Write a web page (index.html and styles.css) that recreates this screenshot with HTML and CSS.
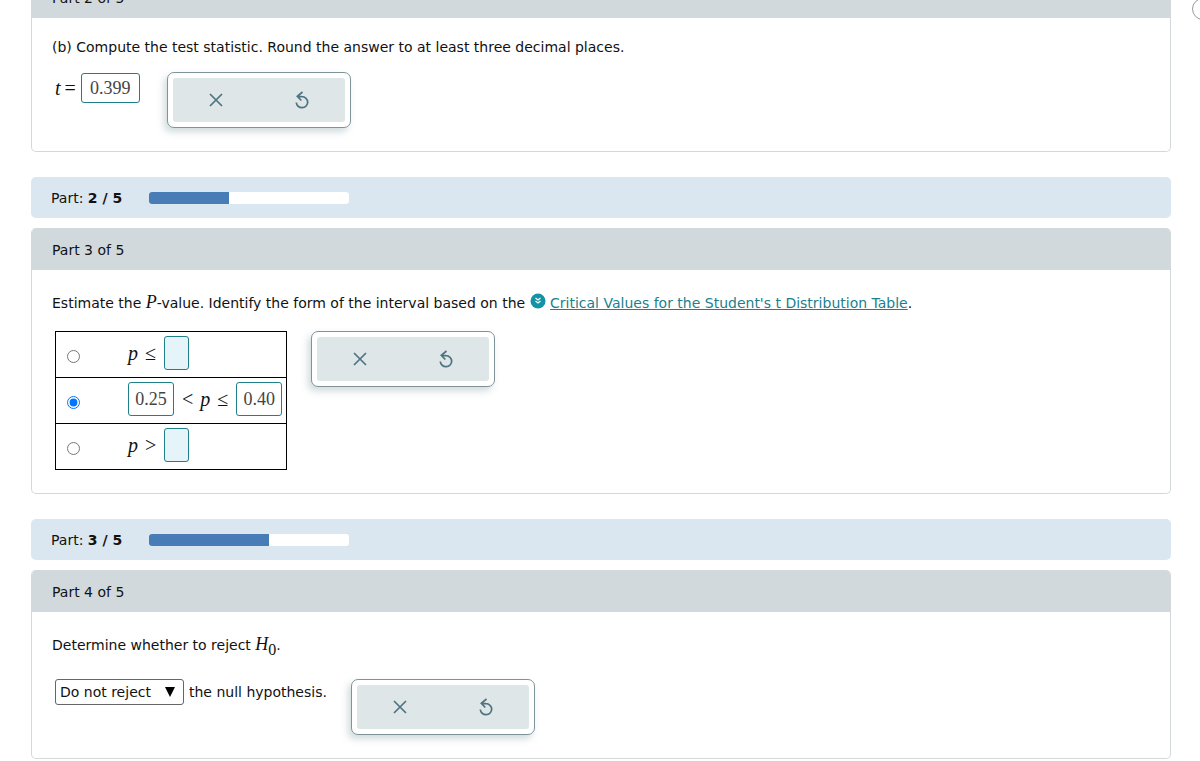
FILE: index.html
```
<!DOCTYPE html>
<html lang="en">
<head>
    <meta charset="UTF-8">
    <meta name="viewport" content="width=device-width, initial-scale=1.0">
    <title>Hypothesis Test</title>
    <link rel="stylesheet" href="styles.css">
</head>
<body>
    <svg class="icon-sprite" aria-hidden="true">
        <symbol id="icon-clear" viewBox="0 0 18 18">
            <path d="M3 3 L15 15 M15 3 L3 15" />
        </symbol>
        <symbol id="icon-undo" viewBox="0 0 18 18">
            <path d="M3.300 11.500 A5.700 5.500 0 1 0 9 5.700 L4.500 5.300 M9.500 1 L4.300 5.300 L8.300 9.500" />
        </symbol>
    </svg>

    <button class="side-btn" type="button" aria-label="Help"></button>

    <main class="container">
        <section class="card">
            <h2 class="card-header">Part 2 of 5</h2>
            <div class="card-body compact">
                <p class="prompt">(b) Compute the test statistic. Round the answer to at least three decimal places.</p>
                <div class="answer-row">
                    <div class="statistic">
                        <label class="formula" for="tValue"><i>t</i> <span>=</span></label>
                        <input class="box" type="text" id="tValue" value="0.399">
                    </div>
                    <div class="keypad">
                        <button type="button" aria-label="Clear"><svg><use href="#icon-clear" /></svg></button>
                        <button type="button" aria-label="Undo"><svg><use href="#icon-undo" /></svg></button>
                    </div>
                </div>
            </div>
        </section>

        <div class="progress">
            <span class="progress-label">Part: <b>2 / 5</b></span>
            <div class="progress-track"><div class="progress-fill" style="width: 40%"></div></div>
        </div>

        <section class="card">
            <h2 class="card-header">Part 3 of 5</h2>
            <div class="card-body">
                <p class="prompt">Estimate the <i class="math">P</i>-value. Identify the form of the interval based on the
                    <svg class="link-icon" viewBox="0 0 16 16" aria-hidden="true">
                        <circle cx="8" cy="8" r="7.5" />
                        <path d="M5.5 5 L8 7 L10.5 5 M5.5 8 L8 10 L10.5 8" />
                    </svg>
                    <a href="#">Critical Values for the Student's t Distribution Table</a>.</p>
                <div class="answer-row">
                    <table class="intervals">
                        <tr>
                            <td>
                                <div class="choice">
                                    <input type="radio" name="interval" aria-label="p at most">
                                    <div class="expression">
                                        <label class="formula" for="atMost"><i>p</i> <span>≤</span></label>
                                        <input class="box empty" type="text" id="atMost">
                                    </div>
                                </div>
                            </td>
                        </tr>
                        <tr>
                            <td>
                                <div class="choice">
                                    <input type="radio" name="interval" aria-label="p between" checked>
                                    <div class="expression">
                                        <input class="box" type="text" id="lower" value="0.25" aria-label="Lower bound">
                                        <label class="formula" for="upper"><span>&lt;</span> <i>p</i> <span>≤</span></label>
                                        <input class="box" type="text" id="upper" value="0.40">
                                    </div>
                                </div>
                            </td>
                        </tr>
                        <tr>
                            <td>
                                <div class="choice">
                                    <input type="radio" name="interval" aria-label="p greater than">
                                    <div class="expression">
                                        <label class="formula" for="above"><i>p</i> <span>&gt;</span></label>
                                        <input class="box empty" type="text" id="above">
                                    </div>
                                </div>
                            </td>
                        </tr>
                    </table>
                    <div class="keypad">
                        <button type="button" aria-label="Clear"><svg><use href="#icon-clear" /></svg></button>
                        <button type="button" aria-label="Undo"><svg><use href="#icon-undo" /></svg></button>
                    </div>
                </div>
            </div>
        </section>

        <div class="progress">
            <span class="progress-label">Part: <b>3 / 5</b></span>
            <div class="progress-track"><div class="progress-fill" style="width: 60%"></div></div>
        </div>

        <section class="card">
            <h2 class="card-header">Part 4 of 5</h2>
            <div class="card-body spacious">
                <p class="prompt">Determine whether to reject <span class="math"><i>H</i><sub>0</sub></span>.</p>
                <div class="answer-row">
                    <div class="conclusion">
                        <span class="select-wrap">
                            <select id="decision">
                                <option>Do not reject</option>
                                <option>Reject</option>
                            </select>
                            <svg class="arrow" viewBox="0 0 10 10" aria-hidden="true"><path d="M0 0 H10 L5 10 Z" /></svg>
                        </span>
                        <label for="decision">the null hypothesis.</label>
                    </div>
                    <div class="keypad">
                        <button type="button" aria-label="Clear"><svg><use href="#icon-clear" /></svg></button>
                        <button type="button" aria-label="Undo"><svg><use href="#icon-undo" /></svg></button>
                    </div>
                </div>
            </div>
        </section>
    </main>
</body>
</html>
```
FILE: styles.css
```
* {
    margin: 0;
    padding: 0;
    box-sizing: border-box;
}

body {
    font-family: Verdana, "DejaVu Sans", sans-serif;
    font-size: 14px;
    line-height: 24px;
    color: #111;
    background: #fff;
    position: relative;
    overflow-x: hidden;
}

.container {
    /* scrolled part way down the first card header */
    margin: -24px 29px 0 31px;
}

.icon-sprite {
    display: none;
}

.side-btn {
    position: absolute;
    top: -2px;
    right: -14px;
    width: 22px;
    height: 22px;
    border: 1px solid #999;
    border-radius: 50%;
    background: #fff;
}

/* Cards */
.card {
    border: 1px solid #d3d9db;
    border-top: none;
    border-radius: 5px;
    overflow: hidden;
}

.card-header {
    height: 42px;
    padding: 2px 20px 0;
    line-height: 40px;
    font-size: 14px;
    font-weight: 400;
    background: #d1d9dc;
}

.card-body {
    padding: 21px 20px 23px;
}

.prompt {
    margin-bottom: 16px;
}

.compact {
    padding-top: 17px;
}

.compact .prompt {
    margin-bottom: 13px;
}

.spacious .prompt {
    margin-bottom: 22px;
}

.answer-row {
    display: flex;
    align-items: flex-start;
    gap: 24px;
    padding-left: 3px;
}

.math,
.formula,
.box {
    font-family: "Liberation Serif", "Times New Roman", serif;
    font-size: 18px;
}

.math {
    line-height: 1;
}

.math sub {
    font-size: 16px;
    line-height: 0;
    vertical-align: -5px;
}

.formula {
    display: flex;
    gap: 7px;
    font-size: 20px;
}

.box {
    height: 34px;
    width: 46px;
    border: 1px solid #1f8088;
    border-radius: 3px;
    color: #444;
    text-align: center;
    background: #fff;
}

.box.empty {
    width: 25px;
    background: #e5f4f8;
}

.statistic {
    display: flex;
    align-items: center;
    gap: 5px;
    padding: 1px 3px 0 0;
}

.statistic .formula {
    gap: 4px;
}

.statistic .box {
    width: 59px;
    height: 30px;
}

/* Clear / undo keypad */
.keypad {
    display: flex;
    width: 184px;
    height: 56px;
    padding: 5px;
    border: 1px solid #7f9499;
    border-radius: 7px;
    background: #fff;
    box-shadow: -3px 4px 7px rgba(70, 110, 120, 0.25);
}

.keypad button {
    flex: 1;
    display: flex;
    align-items: center;
    justify-content: center;
    border: none;
    background: #dfe6e7;
    cursor: pointer;
}

.keypad button:first-child {
    border-radius: 3px 0 0 3px;
}

.keypad button:last-child {
    border-radius: 0 3px 3px 0;
}

.keypad svg {
    width: 18px;
    height: 18px;
    fill: none;
    stroke: #4d7480;
    stroke-width: 1.7;
}

/* Progress bar */
.progress {
    display: flex;
    align-items: center;
    height: 41px;
    margin: 25px 0 10px;
    padding: 0 20px;
    border-radius: 5px;
    background: #dae6f0;
}

.progress-label {
    width: 98px;
}

.progress-track {
    width: 200px;
    height: 12px;
    border-radius: 3px;
    background: #fff;
    overflow: hidden;
}

.progress-fill {
    height: 100%;
    background: #477cb7;
}

/* Interval choices */
a {
    color: #217f8c;
    text-decoration: underline;
}

.link-icon {
    width: 16px;
    height: 16px;
    vertical-align: -1px;
    fill: #1192a5;
}

.link-icon path {
    fill: none;
    stroke: #fff;
    stroke-width: 1.2;
}

.intervals {
    width: 232px;
    border-collapse: collapse;
}

.intervals td {
    height: 46px;
    border: 1px solid #000;
}

.choice {
    display: flex;
    align-items: center;
    padding-left: 11px;
}

.choice input[type="radio"] {
    width: 13px;
    height: 13px;
    margin-top: 4px;
}

.expression {
    display: flex;
    align-items: center;
    gap: 8px;
    margin: 0 0 3px 48px;
}

/* Conclusion */
.conclusion {
    display: flex;
    align-items: center;
    gap: 5px;
}

.select-wrap {
    position: relative;
    display: flex;
}

select {
    appearance: none;
    width: 129px;
    height: 26px;
    padding: 0 4px;
    border: 1px solid #666;
    border-radius: 3px;
    font-family: inherit;
    font-size: 14px;
    color: #111;
    background: #fff;
}

.arrow {
    position: absolute;
    top: 8px;
    right: 9px;
    width: 10px;
    height: 10px;
    pointer-events: none;
}
```
